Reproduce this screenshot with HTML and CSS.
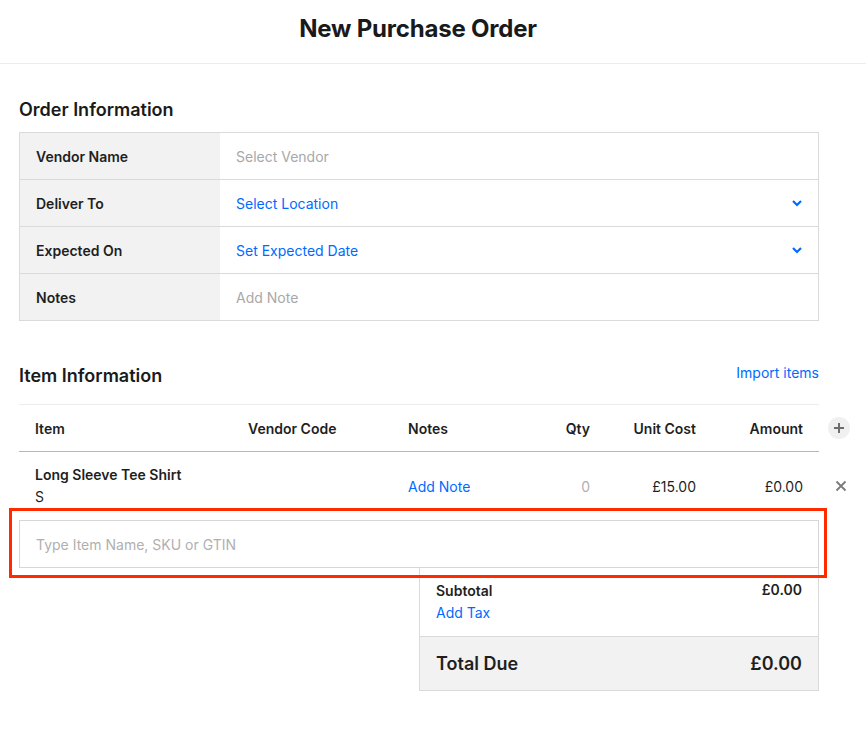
FILE: index.html
```html
<!DOCTYPE html>
<html lang="en">
<head>
    <meta charset="UTF-8">
    <meta name="viewport" content="width=device-width, initial-scale=1.0">
    <title>New Purchase Order</title>
    <link rel="stylesheet" href="styles.css">
</head>
<body>
    <header class="page-header">
        <h1>New Purchase Order</h1>
    </header>

    <main class="content">
        <h2 class="section-title">Order Information</h2>
        <div class="order-table">
            <div class="order-row">
                <div class="order-label">Vendor Name</div>
                <div class="order-value placeholder">Select Vendor</div>
            </div>
            <div class="order-row">
                <div class="order-label">Deliver To</div>
                <div class="order-value link">
                    <span>Select Location</span>
                    <svg class="chevron" width="12" height="8" viewBox="0 0 12 8"><polyline points="2,2 6,6 10,2" fill="none" stroke="#006aff" stroke-width="2.2"/></svg>
                </div>
            </div>
            <div class="order-row">
                <div class="order-label">Expected On</div>
                <div class="order-value link">
                    <span>Set Expected Date</span>
                    <svg class="chevron" width="12" height="8" viewBox="0 0 12 8"><polyline points="2,2 6,6 10,2" fill="none" stroke="#006aff" stroke-width="2.2"/></svg>
                </div>
            </div>
            <div class="order-row">
                <div class="order-label">Notes</div>
                <div class="order-value placeholder">Add Note</div>
            </div>
        </div>

        <div class="item-head">
            <h2 class="section-title">Item Information</h2>
            <a href="#" class="blue-link">Import items</a>
        </div>

        <div class="item-row header-row">
            <div class="cells">
                <div class="cell">Item</div>
                <div class="cell">Vendor Code</div>
                <div class="cell">Notes</div>
                <div class="cell right">Qty</div>
                <div class="cell right">Unit Cost</div>
                <div class="cell right">Amount</div>
            </div>
            <div class="action">
                <span class="add-btn">
                    <svg width="12" height="12" viewBox="0 0 12 12"><path d="M6 1v10M1 6h10" stroke="#6d6d6d" stroke-width="2"/></svg>
                </span>
            </div>
        </div>

        <div class="item-row line-row">
            <div class="cells">
                <div class="cell item-name">
                    <strong>Long Sleeve Tee Shirt</strong>
                    <span>S</span>
                </div>
                <div class="cell"></div>
                <div class="cell"><a href="#" class="blue-link">Add Note</a></div>
                <div class="cell right muted">0</div>
                <div class="cell right">£15.00</div>
                <div class="cell right">£0.00</div>
            </div>
            <div class="action">
                <svg width="12" height="12" viewBox="0 0 12 12"><path d="M1.5 1.5l9 9M10.5 1.5l-9 9" stroke="#7a7a7a" stroke-width="1.8"/></svg>
            </div>
        </div>

        <div class="search-wrap">
            <div class="search-box">Type Item Name, SKU or GTIN</div>
        </div>

        <div class="totals">
            <div class="subtotal">
                <div class="subtotal-line">
                    <span>Subtotal</span>
                    <span>£0.00</span>
                </div>
                <a href="#" class="blue-link">Add Tax</a>
            </div>
            <div class="total-due">
                <span>Total Due</span>
                <span>£0.00</span>
            </div>
        </div>
    </main>
</body>
</html>
```

FILE: styles.css
```css
* {
    margin: 0;
    padding: 0;
    box-sizing: border-box;
}

body {
    font-family: 'Inter', 'Liberation Sans', sans-serif;
    font-size: 14px;
    color: #1f1f1f;
    background: #fff;
}

a {
    text-decoration: none;
}

.blue-link {
    color: #006aff;
}

/* Header */
.page-header {
    height: 64px;
    border-bottom: 1px solid #ececec;
    display: flex;
    align-items: center;
    justify-content: center;
    padding: 0 30px 6px 0;
}

.page-header h1 {
    font-size: 24px;
    font-weight: 700;
    letter-spacing: -0.2px;
    color: #1a1a1a;
}

.content {
    width: 800px;
    margin-left: 19px;
    padding-bottom: 40px;
}

.section-title {
    font-size: 18px;
    font-weight: 600;
    line-height: 24px;
    color: #1a1a1a;
}

.content > .section-title {
    margin-top: 34px;
    margin-bottom: 10px;
}

/* Order information */
.order-table {
    border: 1px solid #dadada;
}

.order-row {
    display: flex;
    height: 47px;
    border-top: 1px solid #dadada;
}

.order-row:first-child {
    border-top: none;
    height: 46px;
}

.order-label {
    width: 200px;
    background: #f2f2f2;
    font-weight: 600;
    padding-left: 16px;
    display: flex;
    align-items: center;
}

.order-value {
    flex: 1;
    padding: 0 15px 0 16px;
    display: flex;
    align-items: center;
    justify-content: space-between;
}

.placeholder {
    color: #a8a8a8;
}

.link {
    color: #006aff;
}

/* Item information */
.item-head {
    margin-top: 43px;
    display: flex;
    justify-content: space-between;
    align-items: center;
    height: 24px;
    margin-bottom: 16px;
}

.item-head .blue-link {
    margin-top: -7px;
}

.item-row {
    display: flex;
    width: 840px;
}

.cells {
    width: 800px;
    display: grid;
    grid-template-columns: 213px 160px 150px 64px 106px 107px;
}

.cell {
    padding: 0 16px;
    display: flex;
    align-items: center;
}

.cell.right {
    justify-content: flex-end;
}

.action {
    flex: 1;
    display: flex;
    align-items: center;
    justify-content: center;
}

.header-row .cells {
    height: 48px;
    border-top: 1px solid #ececec;
    border-bottom: 1px solid #b8b8b8;
    font-weight: 600;
}

.add-btn {
    width: 22px;
    height: 22px;
    border-radius: 50%;
    background: #f0f0f0;
    display: flex;
    align-items: center;
    justify-content: center;
}

.line-row .cells {
    padding: 12px 0;
}

.line-row .action {
    padding-left: 4px;
}

.item-name {
    flex-direction: column;
    align-items: flex-start;
    line-height: 22px;
}

.item-name strong {
    font-weight: 600;
}

.muted {
    color: #b0b0b0;
}

/* Search box with annotation outline */
.search-wrap {
    position: relative;
}

.search-wrap::after {
    content: "";
    position: absolute;
    top: -12px;
    left: -10px;
    right: -8px;
    bottom: -10px;
    border: 3px solid #ff2a00;
    pointer-events: none;
}

.search-box {
    height: 48px;
    border: 1px solid #d6d6d6;
    padding-left: 16px;
    display: flex;
    align-items: center;
    color: #b0b0b0;
}

/* Totals */
.totals {
    width: 400px;
    margin-left: 400px;
    border: 1px solid #dadada;
    border-top: none;
}

.subtotal {
    padding: 12px 16px;
    line-height: 22px;
}

.subtotal-line {
    display: flex;
    justify-content: space-between;
    font-weight: 600;
}

.subtotal-line span:last-child {
    margin-top: -1px;
}

.total-due {
    height: 54px;
    border-top: 1px solid #dadada;
    background: #f2f2f2;
    display: flex;
    justify-content: space-between;
    align-items: center;
    padding: 0 16px;
    font-size: 18px;
    font-weight: 600;
}
```
